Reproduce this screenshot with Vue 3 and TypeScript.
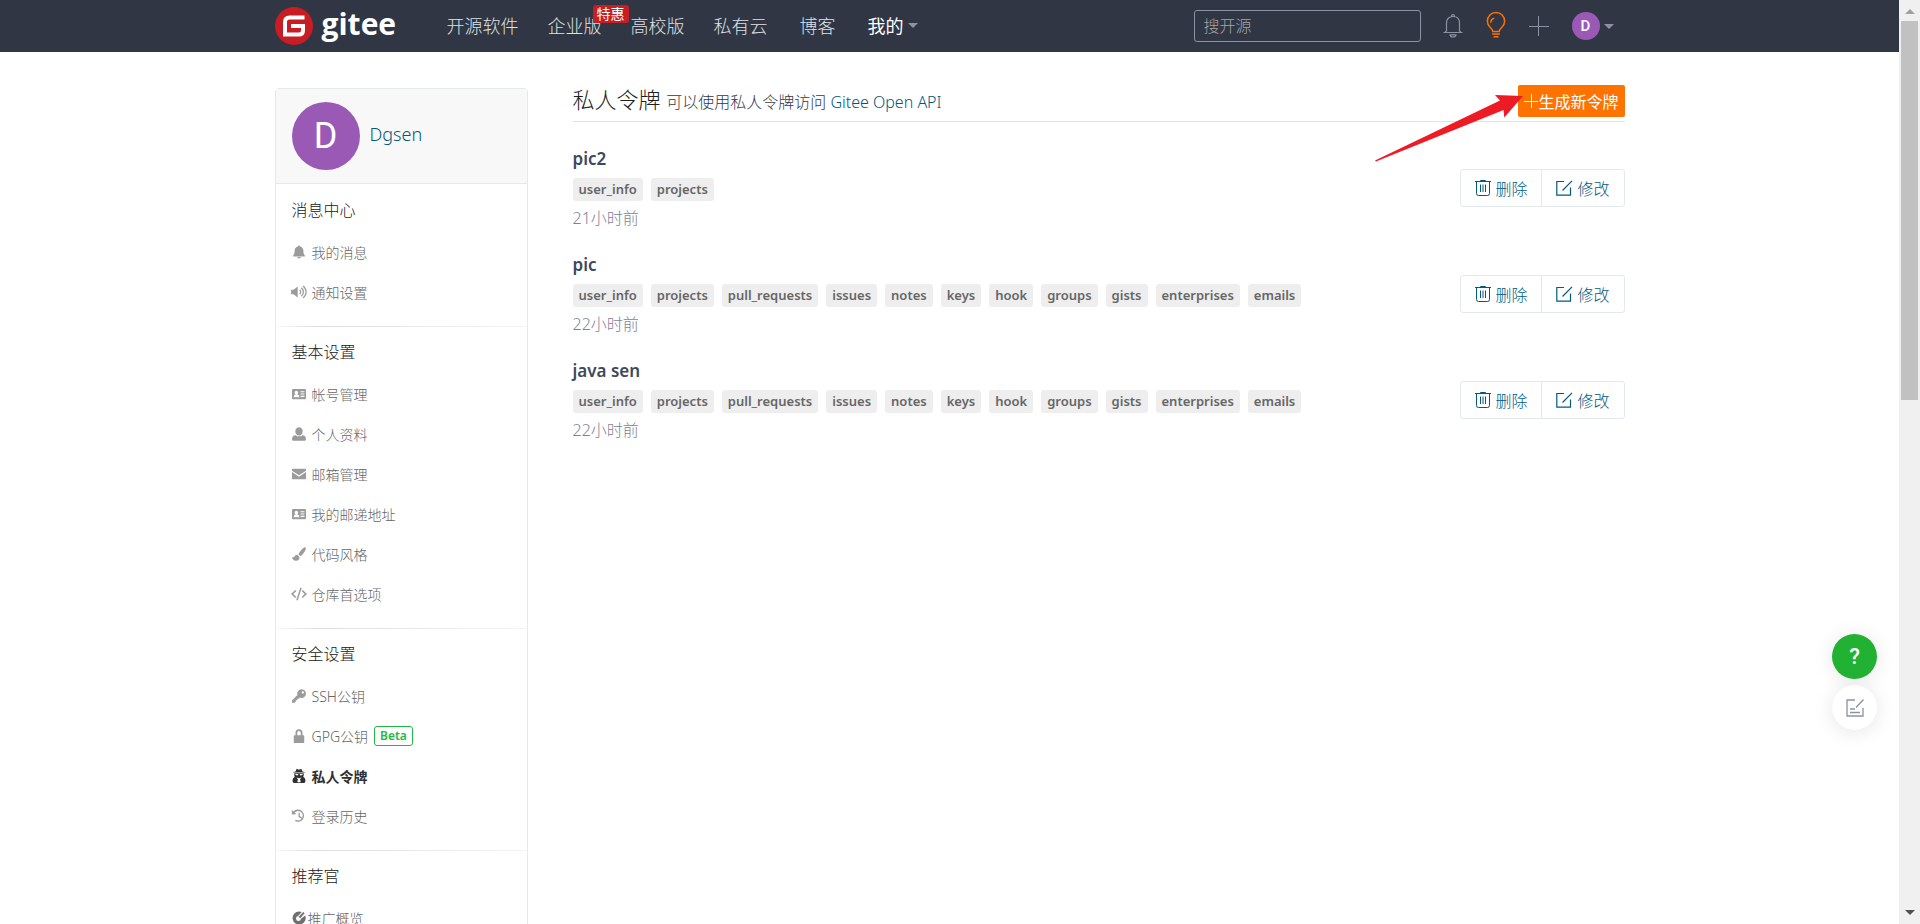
<script setup lang="ts">
interface MenuItem { label: string; icon: string; active?: boolean; beta?: boolean }
interface MenuSection { title: string; items: MenuItem[] }
interface Token { name: string; scopes: string[]; time: string }

const sections: MenuSection[] = [
  { title: '消息中心', items: [{ label: '我的消息', icon: 'bell' }, { label: '通知设置', icon: 'volume' }] },
  {
    title: '基本设置',
    items: [
      { label: '帐号管理', icon: 'card' },
      { label: '个人资料', icon: 'user' },
      { label: '邮箱管理', icon: 'mail' },
      { label: '我的邮递地址', icon: 'card' },
      { label: '代码风格', icon: 'brush' },
      { label: '仓库首选项', icon: 'code' },
    ],
  },
  {
    title: '安全设置',
    items: [
      { label: 'SSH公钥', icon: 'key' },
      { label: 'GPG公钥', icon: 'lock', beta: true },
      { label: '私人令牌', icon: 'spy', active: true },
      { label: '登录历史', icon: 'history' },
    ],
  },
  { title: '推荐官', items: [{ label: '推广概览', icon: 'dash' }] },
]

const icons: Record<string, string> = {
  bell: 'M8 0.6c.7 0 1.1.4 1.2 1.1C11.600 2.300 13 4.200 13 6.600c0 3 .7 4.400 1.700 5.300v1.100H1.300v-1.100C2.300 11 3 9.600 3 6.600c0-2.400 1.400-4.300 3.800-4.900C6.900 1 7.300.6 8 .6zM6 13.800h4a2 1.700 0 0 1-4 0z',
  volume: 'M-1 5.300h2.800L6.500 1.800v12.400L1.800 10.700H-1zM8.300 6l.9-1.100c2 1.600 2 4.600 0 6.200L8.300 10c1.200-1 1.200-3 0-4zM10.200 3.900l.9-1.200c3.500 2.500 3.500 8.100 0 10.600l-.9-1.200c2.800-2 2.800-6.200 0-8.200zM12.200 1.900l.9-1.200c5 3.600 5 11 0 14.600l-.9-1.200c4.200-3 4.200-9.200 0-12.200z',
  card: 'M1.200 2.200h13.600q1.200 0 1.200 1.200v9.400q0 1.200-1.200 1.200H1.200Q0 14 0 12.800V3.400q0-1.200 1.200-1.200zM5 4.200a2 2.200 0 1 0 .01 0zM2 11.700h6.300c0-2.200-1-3-2-3H4c-1 0-2 .8-2 3zM9.800 4.800v1.300h4.400V4.800zM9.800 7.400v1.300h4.400V7.400zM9.800 10v1.300h4.400V10z',
  user: 'M8 0.300a4.300 4.700 0 1 1-.01 0zM4 9.300c2 1.800 6 1.800 8 0 2.500.3 3.900 1.700 3.900 4v1q0 1.400-1.400 1.400h-13Q.1 15.700.1 14.300v-1c0-2.300 1.400-3.700 3.900-4z',
  mail: 'M1 2h14q1 0 1 1v1.200L8 9.500 0 4.200V3q0-1 1-1zM0 5.800l8 5.300 8-5.300V13q0 1-1 1H1q-1 0-1-1z',
  brush: 'M13.500.8c1.400-1 2.800.1 2.200 1.700C14.600 5.400 12.200 9 9.500 10.500L7.300 8.200C8.500 5.500 11.100 2.400 13.500.8zM6.300 9l2.200 2.300c.4 2.800-1.300 4.400-3.900 4.400C2 15.700.3 14 0 11.300c1 .8 2.200.6 2.800-.5.7-1.200 2-2.100 3.500-1.800z',
  code: 'M9.500.6l1.600.5-4.600 14.300-1.600-.5zM3.700 3.400l1.300 1.300L1.500 8 5 11.300l-1.300 1.300L-1.200 8zM12.300 3.400L17.200 8l-4.900 4.600-1.300-1.300L14.500 8 11 4.700z',
  key: 'M11 .2a5 5 0 1 1-2 9.600l-1.200 1.400H6v1.700H4.300v1.700L3 15.800H0V13l6.200-6.200A5 5 0 0 1 11 .2zm1.400 2.400a1.300 1.300 0 1 0 .01 0z',
  lock: 'M4 7V4.500a4 4.200 0 0 1 8 0V7h1q1 0 1 1v7q0 1-1 1H3q-1 0-1-1V8q0-1 1-1zm2 0h4V4.500a2 2.200 0 0 0-4 0z',
  spy: 'M5.400-.2L8 .8l2.600-1 1.400 3c1.800.2 3 .6 3 1.300H1c0-.7 1.200-1.100 3-1.300zM2.600 4.900h10.800v2q0 1.500-.6 2.100c1.600.6 2.500 2 2.500 3.700v1.600q0 1.700-1.700 1.700H2.400Q.7 16 .7 14.300v-1.600C.7 11 1.600 9.600 3.200 9q-.6-.6-.6-2.100zM4 5.700v1.200l2.500.5L7.300 5.700zM12 5.700v1.200l-2.500.5-.8-1.700zM5.200 9.600l1.600 2L6 15h4l-.8-3.400 1.600-2L8 10.600z',
  history: 'M-.2 1l1.900 1.800A7 7 0 1 1 3.300 13.700l1.100-1.300A5.300 5.300 0 1 0 3 4L5 6.100l-5.200.3zM7.400 4.300h1.500V8l2.500 1.700-.8 1.300-3.200-2.100z',
  dash: 'M8 .5a7.500 7.500 0 0 1 3.200.7L7 5.800a2.800 2.800 0 1 0 3.200 3L15 5A7.500 7.500 0 1 1 8 .5zM13 1.200l1.400 1.300-5 5.800-1.800-1.700z',
}

const allScopes = ['user_info', 'projects', 'pull_requests', 'issues', 'notes', 'keys', 'hook', 'groups', 'gists', 'enterprises', 'emails']
const tokens: Token[] = [
  { name: 'pic2', scopes: ['user_info', 'projects'], time: '21小时前' },
  { name: 'pic', scopes: allScopes, time: '22小时前' },
  { name: 'java sen', scopes: allScopes, time: '22小时前' },
]
</script>

<template>
  <div class="window">
    <div class="page">
      <header class="topbar">
        <div class="container bar">
          <a class="logo" href="#">
            <svg width="38" height="38" viewBox="0 0 38 38" aria-hidden="true">
              <circle cx="19" cy="19" r="19" fill="#c71d23" />
              <path d="M29.500 10.500H14.500q-4.500 0-4.500 4.500v12.500H24q4 0 4-4v-4.500H16" fill="none" stroke="#fff" stroke-width="4" />
            </svg>
            <span>gitee</span>
          </a>
          <nav class="nav">
            <a href="#">开源软件</a>
            <a href="#" class="promo">企业版<span class="sale">特惠</span></a>
            <a href="#">高校版</a>
            <a href="#">私有云</a>
            <a href="#" class="blog">博客</a>
            <a href="#" class="mine">我的<i class="caret"></i></a>
          </nav>
          <input class="search" type="text" placeholder="搜开源" aria-label="搜开源" />
          <div class="tools">
            <button type="button" aria-label="通知">
              <svg width="20" height="24" viewBox="0 0 20 24" fill="none" stroke="#8c92a4" stroke-width="1.200">
                <path d="M3.500 17V9c0-4 2.500-6.500 6.500-6.500S16.500 5 16.500 9v8l1.500 1.500M3.500 17L2 18.500M.5 18.500h19M7 20.800h6c0 1.400-1.200 2.200-3 2.200s-3-.8-3-2.200zM8.500 2.500c0-2.400 3-2.400 3 0" />
              </svg>
            </button>
            <button type="button" aria-label="提示">
              <svg width="20" height="24" viewBox="0 0 20 24" fill="none" stroke="#fe7300" stroke-width="1.500">
                <path d="M6.800 17.500c0-1.800-1-2.700-2.700-4.200A8.600 8.600 0 1 1 15.900 13.300c-1.700 1.500-2.700 2.400-2.700 4.200zM4.800 8.800c0-2.300 1.200-4 3.400-4.500M6.200 20h7.600M7.500 22.800h5" />
              </svg>
            </button>
            <button type="button" aria-label="新建">
              <svg width="20" height="20" viewBox="0 0 20 20" fill="none" stroke="#8c92a4" stroke-width="1"><path d="M9.500 0v20M0 10.500h20" /></svg>
            </button>
            <button type="button" class="account" aria-label="帐户"><span class="mini">D</span><i class="caret"></i></button>
          </div>
        </div>
      </header>

      <div class="container columns">
        <aside class="side">
          <div class="profile">
            <span class="avatar">D</span>
            <a href="#">Dgsen</a>
          </div>
          <section v-for="s in sections" :key="s.title" class="group">
            <h2>{{ s.title }}</h2>
            <a v-for="m in s.items" :key="m.label" href="#" class="item" :class="{ active: m.active, compact: m.icon === 'dash' }">
              <svg width="14" height="14" viewBox="0 0 16 16" aria-hidden="true"><path :d="icons[m.icon]" fill="currentColor" fill-rule="evenodd" /></svg>
              <span>{{ m.label }}</span>
              <b v-if="m.beta" class="beta">Beta</b>
            </a>
          </section>
        </aside>

        <main class="main">
          <div class="heading">
            <h1>私人令牌 <small>可以使用私人令牌访问 <a href="#">Gitee Open API</a></small></h1>
            <button type="button" class="create">
              <svg width="14" height="14" viewBox="0 0 14 14" aria-hidden="true"><path d="M7.500 0v14M0 7.500h14" stroke="#fff" fill="none" /></svg>生成新令牌
            </button>
            <svg class="arrow" width="148" height="68" viewBox="0 0 148 68" aria-hidden="true">
              <path d="M0 66.500L1 67.500 128.500 16l.8 7.500L148 2l-28-1 5 5.500z" fill="#ed1c24" />
            </svg>
          </div>
          <ul class="tokens">
            <li v-for="t in tokens" :key="t.name">
              <div>
                <h3>{{ t.name }}</h3>
                <div class="scopes"><span v-for="s in t.scopes" :key="s">{{ s }}</span></div>
                <p>{{ t.time }}</p>
              </div>
              <div class="actions">
                <button type="button">
                  <svg width="16" height="16" viewBox="0 0 16 16" fill="none" stroke="currentColor"><path d="M0 1.500h16M5.500 1V.5h5V1M1.500 2v11.500q0 2 2 2h9q2 0 2-2V2M5.500 4.500v7.500M8 4.500v7.500M10.500 4.500v7.500" /></svg>
                  删除
                </button>
                <button type="button">
                  <svg width="16" height="16" viewBox="0 0 16 16" fill="none" stroke="currentColor" stroke-width="1.200"><path d="M8 1.500H.8v13.700h13.700V7.500M6.500 10.500L16 .8" /></svg>
                  修改
                </button>
              </div>
            </li>
          </ul>
        </main>
      </div>

      <div class="floaters">
        <button type="button" class="help">?</button>
        <button type="button" class="feedback" aria-label="反馈">
          <svg width="18" height="18" viewBox="0 0 18 18" fill="none" stroke="#8c92a4" stroke-width="1.300"><path d="M9 1H1v16h16V9M10 8.500L17.500.5M4 10h5M4 13.500h10" /></svg>
        </button>
      </div>
    </div>

    <div class="scrollbar" aria-hidden="true">
      <i class="up"></i>
      <div class="track"><div class="thumb"></div></div>
      <i class="down"></i>
    </div>
  </div>
</template>

<style>
body { margin: 0; background: #fff; }
</style>

<style scoped>
* { box-sizing: border-box; }
.window { display: flex; height: 100vh; overflow: hidden; font-family: "Noto Sans", "Noto Sans CJK SC", sans-serif; font-size: 16px; font-weight: 300; color: #40485b; }
.page { position: relative; flex: 1; min-width: 0; overflow: hidden; }
.container { max-width: 1350px; margin: 0 auto; }
a { color: #005980; text-decoration: none; }
button { font: inherit; color: inherit; border: 0; background: none; padding: 0; cursor: pointer; }
svg { display: block; flex: none; overflow: visible; }
h1, h2, h3, p, ul { margin: 0; padding: 0; font-weight: 300; }

.topbar { background: #303643; }
.bar { display: flex; align-items: center; height: 52px; }
.logo { display: flex; align-items: center; gap: 9px; width: 172px; color: #fff; font: 700 30px/36px "Open Sans", sans-serif; }
.logo span { padding-bottom: 4px; }
.nav { display: flex; gap: 29px; flex: 1; padding-bottom: 2px; font-size: 18px; white-space: nowrap; }
.nav a { color: #dfe1e6; }
.promo { position: relative; }
.sale { position: absolute; left: 45px; top: -7px; width: 36px; border-radius: 3px; background: #c71d23; color: #fff; font-size: 14px; font-weight: 400; line-height: 18px; text-align: center; }
.blog { margin: 0 3px; }
.nav .mine { display: flex; align-items: center; gap: 4px; color: #fff; font-weight: 400; }
.caret { border: 5px solid transparent; border-top-color: #8c92a4; border-bottom: 0; }
.search { width: 227px; height: 32px; padding: 0 9px; border: 1px solid #8c92a4; border-radius: 3px; background: transparent; color: #fff; font: inherit; }
.search::placeholder { color: #a5a5a8; }
.tools { display: flex; align-items: center; gap: 23px; padding: 0 11px 0 22px; }
.account { display: flex; align-items: center; gap: 4px; }
.mini { width: 28px; height: 28px; border-radius: 50%; background: #9b59b6; color: #fff; font: 500 15px/28px Roboto, sans-serif; text-align: center; }

.columns { display: flex; align-items: flex-start; gap: 45px; padding-top: 36px; }
.side { width: 253px; flex: none; border: 1px solid #e3e9ed; border-radius: 4px; }
.profile { display: flex; align-items: center; gap: 10px; height: 95px; padding: 0 16px; background: #f8f8f8; border-bottom: 1px solid #e3e9ed; font-size: 18px; }
.profile a { padding-bottom: 5px; }
.avatar { width: 68px; height: 68px; border-radius: 50%; background: #9b59b6; color: #fff; font: 400 36px/68px Roboto, sans-serif; text-align: center; }
.group { position: relative; padding: 5px 16px 14px; }
.group + .group::before { content: ""; position: absolute; left: 1px; right: 1px; top: 0; height: 1px; background: linear-gradient(90deg, #f8f8f8, #dededf 15%, #f4f4f4); }
h2 { height: 43px; font-size: 16px; line-height: 43px; color: #202020; }
.item { display: flex; align-items: center; gap: 6px; height: 40px; font-size: 14px; color: #9b9b9b; }
.item span { color: #666; }
.item.compact { gap: 2px; color: #707070; }
.item.active, .item.active span { color: #303030; font-weight: 700; }
.beta { padding: 0 5px; border: 1px solid #21ba45; border-radius: 3px; color: #21ba45; font-size: 12px; line-height: 18px; font-weight: 600; }

.main { flex: 1; min-width: 0; }
.heading { position: relative; display: flex; align-items: center; justify-content: space-between; height: 34px; padding-bottom: 8px; border-bottom: 1px solid #e1e2e4; }
h1 { font-size: 22px; line-height: 34px; color: #202020; white-space: nowrap; }
small { font-size: 16px; color: #30384b; }
.create { display: flex; align-items: center; justify-content: center; height: 32px; padding: 0 6px; border-radius: 2px; background: #fe7300; color: #fff; font-weight: 400; }
.arrow { position: absolute; right: 102px; top: 6px; }
.tokens { list-style: none; padding-top: 24px; }
li { display: flex; align-items: center; justify-content: space-between; margin-bottom: 22px; }
h3 { font-size: 17px; line-height: 26px; font-weight: 600; }
.scopes { display: flex; gap: 8px; margin: 6px 0 5px; }
.scopes span { padding: 0 6px; border-radius: 3px; background: #eee; color: #666; font-size: 13px; line-height: 23px; font-weight: 600; }
p { line-height: 24px; color: #7d8396; }
.actions { display: flex; height: 38px; border: 1px solid #e3e9ed; border-radius: 3px; }
.actions button { display: flex; align-items: center; gap: 4px; padding: 0 14px; color: #005980; white-space: nowrap; }
.actions button + button { border-left: 1px solid #e3e9ed; gap: 5px; }

.floaters { position: absolute; right: 22px; bottom: 194px; display: flex; flex-direction: column; gap: 6px; }
.floaters button { display: flex; align-items: center; justify-content: center; width: 45px; height: 45px; border-radius: 50%; box-shadow: 0 2px 20px rgba(0, 0, 0, .1); background: #fff; }
.floaters .help { background: #22b233; color: #fff; font: 500 22px/45px Roboto, sans-serif; }

.scrollbar { display: flex; flex-direction: column; align-items: center; width: 21px; background: #f0f0f0; }
.scrollbar .up { margin: 9px 0 7px; border: 5px solid transparent; border-bottom-color: #a0a0a0; border-top: 0; }
.scrollbar .down { margin: 7px 0 9px; border: 5px solid transparent; border-top-color: #505050; border-bottom: 0; }
.track { flex: 1; width: 17px; }
.thumb { height: 43%; background: #c1c1c1; }
</style>
